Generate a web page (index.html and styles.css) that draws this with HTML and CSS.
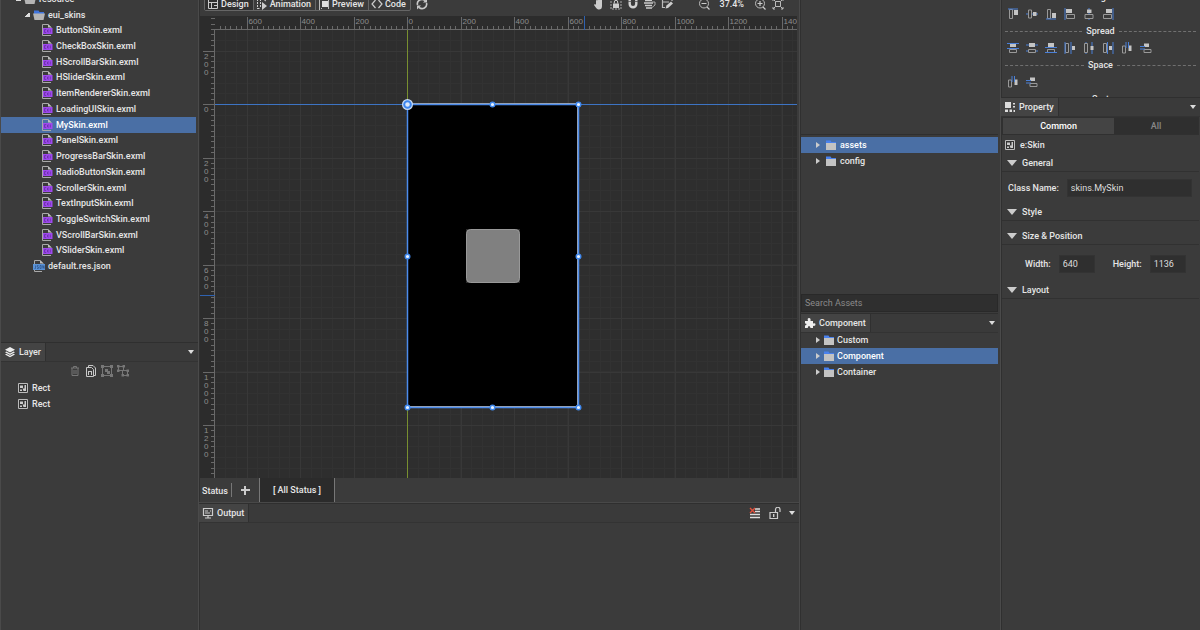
FILE: index.html
```html
<!DOCTYPE html>
<html lang="en">
<head>
<meta charset="utf-8">
<title>MySkin.exml</title>
<link rel="stylesheet" href="styles.css">
</head>
<body>
<svg class="defs" aria-hidden="true">
  <symbol id="exml" viewBox="0 0 12 12"><path d="M1.5 11.5v-11H7l3 3v1M1.5 11.5H10" fill="none" stroke="#a9a9a9"/><path d="M7 0v3.5h3.5z" fill="#bdbdbd"/><path d="M2 4h9.500v6H2z" fill="#9f4aee"/><path d="M3.5 5.5v3M3.500 5.500h1.500M3.500 7h1M3.500 8.500h1.500M6 5.500l1.500 3M7.500 5.500L6 8.500M9.300 5.500v3" stroke="#6a2da6" stroke-width=".8" fill="none"/></symbol>
  <symbol id="json" viewBox="0 0 12 12"><path d="M1.500 11.500v-11H7l3 3v1M1.500 11.500H9" fill="none" stroke="#a9a9a9"/><path d="M7 0v3.500h3.500z" fill="#bdbdbd"/><path d="M0 4h12v6H0z" fill="#5b93d6"/><path d="M2.500 5.500v3H1.500M5.500 5.500H4.200V7h1.200v1.500H4M7 5.500h1.200v3H7zM9.800 8.500v-3l1.300 3v-3" stroke="#2c5288" stroke-width=".7" fill="none"/></symbol>
  <symbol id="folder" viewBox="0 0 12 12"><path d="M1 1.500h4.500l1 1.500H11v3H1z" fill="#4a82ee"/><path d="M1 4h10v7H1z" fill="#c3c3c3"/></symbol>
  <symbol id="folder-open" viewBox="0 0 12 12"><path d="M1 1.500h4.500l1 1.500H11v3H1z" fill="#3f74dd"/><path d="M0 4.500h12L10.500 11h-9z" fill="#b5b5b5"/></symbol>
  <symbol id="skin" viewBox="0 0 12 12"><path d="M1.500 1.500h9v9h-9z" fill="#333" stroke="#bbb"/><path d="M3 3.500h3V6H3zM7.500 3h1.500V7H7.500zM3 7.500h2v1.500H3zM5.500 6.500h3.500v2.500H6.500z" fill="#ccc"/></symbol>
  <symbol id="layers" viewBox="0 0 12 12"><path d="M6 1l5 2.700-5 2.800-5-2.800zM1 6.200l1.400-.7L6 7.500l3.600-2 1.400.7L6 9zM1 8.500l1.400-.7L6 9.700l3.600-1.900 1.400.7-5 2.800z" fill="#eee"/></symbol>
  <symbol id="trash" viewBox="0 0 12 12"><path d="M2 3h8M4.500 3V1.500h3V3M3 3v7.500h6V3M5 5v4M7 5v4" fill="none" stroke="#777"/></symbol>
  <symbol id="copy" viewBox="0 0 12 12"><path d="M3.500 2.500v-2H8L10.500 3v7.500H9" fill="none" stroke="#c8c8c8"/><path d="M1.500 2.500h5l2 2v7h-7z" fill="#3b3b3b" stroke="#c8c8c8"/><path d="M3.500 6v4M6.500 6v4M3 6.500h4" stroke="#c8c8c8"/></symbol>
  <symbol id="group" viewBox="0 0 12 12"><path d="M1.500 1.500h9v9h-9z" fill="none" stroke="#777"/><path d="M0 0h3v3H0zM9 0h3v3H9zM0 9h3v3H0zM9 9h3v3H9zM4 4h3v3H4zM6 6h3v3H6z" fill="#777"/></symbol>
  <symbol id="ungroup" viewBox="0 0 12 12"><path d="M1.500 1.500h5v4h-5zM5.500 5.500h5v5h-5z" fill="none" stroke="#777"/><path d="M0 0h2.500v2.500H0zM5.500 0H8v2.500H5.500zM0 4.500h2.500V7H0zM4.500 9H7v2.500H4.500zM9.500 9H12v2.500H9.500zM9.500 4.500H12V7H9.500z" fill="#777"/></symbol>
  <symbol id="design" viewBox="0 0 12 12"><path d="M1.500 1.500h9v9h-9zM1.500 4.500h9M4.500 4.500v6M7 7.500h3.500" fill="none" stroke="#ccc"/></symbol>
  <symbol id="anim" viewBox="0 0 12 12"><path d="M1.500 1v10M1.500 1.500H6M1.500 10.500h3M4.500 1v9" fill="none" stroke="#ccc" stroke-dasharray="2 1"/><path d="M6 4l5 4-5 4z" fill="#ccc"/><path d="M7 1l3 2" stroke="#ccc"/></symbol>
  <symbol id="preview" viewBox="0 0 12 12"><path d="M1.500 0v12M3 1h1M3 10.500h1M10.500 1v10" stroke="#bbb" fill="none"/><path d="M4 3h6v6H4z" fill="#ddd"/></symbol>
  <symbol id="code" viewBox="0 0 12 12"><path d="M4.500 2L1 6l3.500 4M7.500 2L11 6l-3.500 4" fill="none" stroke="#ccc" stroke-width="1.200"/></symbol>
  <symbol id="refresh" viewBox="0 0 12 12"><path d="M1.500 7A4.500 4.500 0 0 1 9 2.700M10.500 5A4.500 4.500 0 0 1 3 9.300" fill="none" stroke="#c8c8c8" stroke-width="1.600"/><path d="M7 4.500h4V.5zM5 7.500H1v4z" fill="#c8c8c8"/></symbol>
  <symbol id="hand" viewBox="0 0 12 12"><path d="M3 6V2.500q.8-1 1.400 0V1q.8-1 1.500 0v-.3q.8-.9 1.500 0v1q.9-.9 1.600 0V8q0 3.500-3 3.500H5.500Q4 11.500 1 7q0-1.500 2-.4z" fill="#ccc"/></symbol>
  <symbol id="lock" viewBox="0 0 12 12"><path d="M1 1h10v10H1z" fill="none" stroke="#aaa" stroke-dasharray="2 1"/><path d="M3 5.500h6V10H3z" fill="#ccc"/><path d="M4.300 5.500V4a1.700 1.700 0 0 1 3.400 0v1.500" fill="none" stroke="#ccc"/></symbol>
  <symbol id="magnet" viewBox="0 0 12 12"><path d="M2.700 1v5a3.300 3.300 0 0 0 6.600 0V1" fill="none" stroke="#d2d2d2" stroke-width="2.400"/><path d="M1 3.500h3.500M7.500 3.500H11" stroke="#555" stroke-width=".8"/></symbol>
  <symbol id="stack" viewBox="0 0 12 12"><path d="M1 2.500h7M0 5h9M1 7.500h7M2 10h6" stroke="#ccc" stroke-width="1.700"/><path d="M8 4h3v3L8 9.500" fill="none" stroke="#aaa"/></symbol>
  <symbol id="edit" viewBox="0 0 12 12"><path d="M11 3V1.500H1.500v8H4M1.500 4H8" fill="none" stroke="#bbb" stroke-width="1.200"/><path d="M4.500 10.500l1-3 4.500-4 2 2L7 10z" fill="#ccc"/></symbol>
  <symbol id="zoom-out" viewBox="0 0 12 12"><circle cx="6" cy="5.500" r="4.500" fill="none" stroke="#bbb"/><path d="M3.500 5.500h5M9 9l2.500 2.500" stroke="#ccc" stroke-width="1.200"/></symbol>
  <symbol id="zoom-in" viewBox="0 0 12 12"><circle cx="6" cy="5.500" r="4.500" fill="none" stroke="#bbb"/><path d="M3.500 5.500h5M6 3v5M9 9l2.500 2.500" stroke="#ccc" stroke-width="1.200"/></symbol>
  <symbol id="fit" viewBox="0 0 12 12"><path d="M3.500 3.500h5v5h-5zM1 3V1h2M9 1h2v2M11 9v2H9M3 11H1V9M1 1l2.500 2.500M11 1L8.500 3.500M11 11L8.500 8.500M1 11l2.500-2.500" fill="none" stroke="#bbb"/></symbol>
  <symbol id="output" viewBox="0 0 12 12"><path d="M1.500 1.500h9v7h-9zM3 11h6M6 8.500v2.500M3 4h3M3 6h5M8 4h1" fill="none" stroke="#ccc" stroke-width="1.200"/></symbol>
  <symbol id="clear" viewBox="0 0 12 12"><path d="M6 2h5M6 4.500h5M1 7.500h10M1 10.500h10" stroke="#ddd" stroke-width="1.500"/><path d="M1 1l5 5M6 1L1 6" stroke="#e0503c" stroke-width="1.400"/></symbol>
  <symbol id="unlock" viewBox="0 0 12 12"><path d="M1 5.500h7.500v6H1zM6.500 5V2.500a2.200 2.200 0 0 1 4.500 0V5" fill="none" stroke="#ccc" stroke-width="1.200"/><path d="M4.700 7v3" stroke="#ccc" stroke-width="1.400"/></symbol>
  <symbol id="puzzle" viewBox="0 0 12 12"><path d="M1 4h3q-1-3 1-3t1.500 3H9v2.500q2.500-.8 2.500 1T9 8.800V11H6.500Q6 9 5 9t-1.300 2H1V8.500q1.500-.2 1.500-1.200T1 6.500z" fill="#eee"/></symbol>
  <symbol id="property" viewBox="0 0 12 12"><path d="M1 1h6v6H1zM1 8.500h3V11H1zM5.500 8.500H8V11H5.500zM9 2h2v1.500H9zM9 5h2v1.500H9zM9.500 9H11v2H9.500z" fill="#ddd"/></symbol>
  <!-- align and distribute glyphs -->
  <symbol id="a-top" viewBox="0 0 12 12"><path d="M2.500 1.500h3v9h-3z" fill="none" stroke="#999"/><path d="M7 2h4v5H7z" fill="#c4c4c4"/><path d="M1 1h10" stroke="#4a80d8"/></symbol>
  <symbol id="a-mid" viewBox="0 0 12 12"><path d="M0 6h12" stroke="#4a80d8"/><path d="M2.500 2h3v8h-3z" fill="#3b3b3b" stroke="#999"/><path d="M7 4h3.500v4H7z" fill="#c4c4c4"/></symbol>
  <symbol id="a-bot" viewBox="0 0 12 12"><path d="M2.500 1.500h3v9h-3z" fill="none" stroke="#999"/><path d="M7 5h4v5H7z" fill="#c4c4c4"/><path d="M1 11h10" stroke="#4a80d8"/></symbol>
  <symbol id="a-left" viewBox="0 0 12 12"><path d="M2.500 6.500h8v4h-8z" fill="none" stroke="#999"/><path d="M2 1h6v4H2z" fill="#c4c4c4"/><path d="M1 0v12" stroke="#4a80d8"/></symbol>
  <symbol id="a-center" viewBox="0 0 12 12"><path d="M6 0v12" stroke="#4a80d8"/><path d="M2 6.500h8v4H2z" fill="#3b3b3b" stroke="#999"/><path d="M4 1.500h4.500v3.500H4z" fill="#c4c4c4"/></symbol>
  <symbol id="a-right" viewBox="0 0 12 12"><path d="M1.500 6.500h8v4h-8z" fill="none" stroke="#999"/><path d="M4 1h6v4H4z" fill="#c4c4c4"/><path d="M11 0v12" stroke="#4a80d8"/></symbol>
  <symbol id="s-top" viewBox="0 0 12 12"><path d="M0 1.500h12M0 6.500h12" stroke="#4a80d8"/><path d="M3 2h6v3H3z" fill="#c4c4c4"/><path d="M2.500 7.500h7v3h-7z" fill="none" stroke="#999"/></symbol>
  <symbol id="s-mid" viewBox="0 0 12 12"><path d="M0 3h12M0 9h12" stroke="#4a80d8"/><path d="M3 1h6v4H3z" fill="#c4c4c4"/><path d="M2.500 7.500h7v3h-7z" fill="#3b3b3b" stroke="#999"/></symbol>
  <symbol id="s-bot" viewBox="0 0 12 12"><path d="M3 1h6v4H3z" fill="#c4c4c4"/><path d="M2.500 7.500h7v3h-7z" fill="none" stroke="#999"/><path d="M0 5.500h12M0 10.500h12" stroke="#4a80d8"/></symbol>
  <symbol id="s-left" viewBox="0 0 12 12"><path d="M1.500 1.500h3v9h-3z" fill="none" stroke="#999"/><path d="M8 4h3v4H8z" fill="#c4c4c4"/><path d="M1 0v12M7 0v12" stroke="#4a80d8"/></symbol>
  <symbol id="s-center" viewBox="0 0 12 12"><path d="M3 0v12M9 0v12" stroke="#4a80d8"/><path d="M1.500 1.500h3v9h-3z" fill="#3b3b3b" stroke="#999"/><path d="M7.500 4h3v4h-3z" fill="#c4c4c4"/></symbol>
  <symbol id="s-right" viewBox="0 0 12 12"><path d="M1.500 1.500h3v9h-3z" fill="none" stroke="#999"/><path d="M7 4h3v4H7z" fill="#c4c4c4"/><path d="M5.500 0v12M11 0v12" stroke="#4a80d8"/></symbol>
  <symbol id="p-h" viewBox="0 0 12 12"><path d="M1.500 4h3v7h-3z" fill="none" stroke="#999"/><path d="M7.500 3.500h3V9h-3z" fill="#c4c4c4"/><path d="M5 0v6M7.500 0v6" stroke="#4a80d8"/></symbol>
  <symbol id="p-v" viewBox="0 0 12 12"><path d="M4 1.500h5V5H4z" fill="#c4c4c4"/><path d="M4 7.500h7v3H4z" fill="none" stroke="#999"/><path d="M0 4.500h5M0 7h5" stroke="#4a80d8"/></symbol>
</svg>

<main class="ide">
  <aside class="col explorer">
    <section class="files">
      <ul class="tree">
        <li class="lv0"><i class="open"></i><svg class="ic"><use href="#folder-open"/></svg>resource</li>
        <li class="lv1"><i class="open"></i><svg class="ic"><use href="#folder-open"/></svg>eui_skins</li>
        <li class="lv2"><svg class="ic"><use href="#exml"/></svg>ButtonSkin.exml</li>
        <li class="lv2"><svg class="ic"><use href="#exml"/></svg>CheckBoxSkin.exml</li>
        <li class="lv2"><svg class="ic"><use href="#exml"/></svg>HScrollBarSkin.exml</li>
        <li class="lv2"><svg class="ic"><use href="#exml"/></svg>HSliderSkin.exml</li>
        <li class="lv2"><svg class="ic"><use href="#exml"/></svg>ItemRendererSkin.exml</li>
        <li class="lv2"><svg class="ic"><use href="#exml"/></svg>LoadingUISkin.exml</li>
        <li class="lv2 selected"><svg class="ic"><use href="#exml"/></svg>MySkin.exml</li>
        <li class="lv2"><svg class="ic"><use href="#exml"/></svg>PanelSkin.exml</li>
        <li class="lv2"><svg class="ic"><use href="#exml"/></svg>ProgressBarSkin.exml</li>
        <li class="lv2"><svg class="ic"><use href="#exml"/></svg>RadioButtonSkin.exml</li>
        <li class="lv2"><svg class="ic"><use href="#exml"/></svg>ScrollerSkin.exml</li>
        <li class="lv2"><svg class="ic"><use href="#exml"/></svg>TextInputSkin.exml</li>
        <li class="lv2"><svg class="ic"><use href="#exml"/></svg>ToggleSwitchSkin.exml</li>
        <li class="lv2"><svg class="ic"><use href="#exml"/></svg>VScrollBarSkin.exml</li>
        <li class="lv2"><svg class="ic"><use href="#exml"/></svg>VSliderSkin.exml</li>
        <li class="lv1 leaf"><svg class="ic"><use href="#json"/></svg>default.res.json</li>
      </ul>
    </section>
    <section>
      <header class="head"><h2 class="tab"><svg class="ic"><use href="#layers"/></svg>Layer</h2><button class="more" aria-label="Layer menu"></button></header>
      <div class="layer-tools">
        <button aria-label="Delete"><svg class="ic"><use href="#trash"/></svg></button>
        <button aria-label="Copy"><svg class="ic"><use href="#copy"/></svg></button>
        <button aria-label="Group"><svg class="ic"><use href="#group"/></svg></button>
        <button aria-label="Ungroup"><svg class="ic"><use href="#ungroup"/></svg></button>
      </div>
      <ul class="layers">
        <li><svg class="ic"><use href="#skin"/></svg>Rect</li>
        <li><svg class="ic"><use href="#skin"/></svg>Rect</li>
      </ul>
    </section>
  </aside>

  <section class="col editor">
    <div class="toolbar">
      <div class="modes">
        <button class="on"><svg class="ic"><use href="#design"/></svg>Design</button>
        <button><svg class="ic"><use href="#anim"/></svg>Animation</button>
        <button><svg class="ic"><use href="#preview"/></svg>Preview</button>
        <button><svg class="ic"><use href="#code"/></svg>Code</button>
      </div>
      <button aria-label="Refresh"><svg class="ic"><use href="#refresh"/></svg></button>
      <div class="tools">
        <button aria-label="Hand"><svg class="ic"><use href="#hand"/></svg></button>
        <button aria-label="Lock"><svg class="ic"><use href="#lock"/></svg></button>
        <button aria-label="Snap"><svg class="ic"><use href="#magnet"/></svg></button>
        <button aria-label="Layers"><svg class="ic"><use href="#stack"/></svg></button>
        <button aria-label="Edit"><svg class="ic"><use href="#edit"/></svg></button>
      </div>
      <div class="zoom">
        <button aria-label="Zoom out"><svg class="ic"><use href="#zoom-out"/></svg></button>
        <output>37.4%</output>
        <button aria-label="Zoom in"><svg class="ic"><use href="#zoom-in"/></svg></button>
        <button aria-label="Fit"><svg class="ic"><use href="#fit"/></svg></button>
      </div>
    </div>
    <div class="stage">
      <svg class="canvas" id="canvas" role="img" aria-label="Canvas">
        <g id="grid"></g>
        <path class="guide" d="M15 88.500H3000"/>
        <path class="guide-y" d="M207.500 14V3000"/>
        <path d="M207 88h172v304H207z" fill="#000"/>
        <rect x="266" y="213" width="54" height="54" fill="#4c4c4c"/>
        <path d="M266 218v-5h5zM315 213h5v5zM320 262v5h-5zM271 267h-5v-5z" fill="#2a2a2a"/>
        <rect x="266.500" y="213.500" width="53" height="53" rx="4" fill="#808080" stroke="#999"/>
        <path class="edge-light" d="M207 87.500h171.500M377.500 88v303M207 390.500h171"/>
        <path class="edge" d="M207.500 391.500V88.500H378.500V391.500z"/>
        <g class="handles">
          <circle cx="292.500" cy="88.500" r="2.300"/><circle cx="378.500" cy="88.500" r="2.300"/>
          <circle cx="207.500" cy="240.500" r="2.300"/><circle cx="378.500" cy="240.500" r="2.300"/>
          <circle cx="207.500" cy="391.500" r="2.300"/><circle cx="292.500" cy="391.500" r="2.300"/><circle cx="378.500" cy="391.500" r="2.300"/>
        </g>
        <circle cx="207.500" cy="88.500" r="5.500" fill="#c9dcf5"/>
        <circle cx="207.500" cy="88.500" r="3.300" fill="#dbe7f8" stroke="#3d86ee" stroke-width="2"/>
        <g id="rulers" class="rulers"></g>
      </svg>
    </div>
    <div class="status">
      <span class="status-name">Status</span>
      <button class="add" aria-label="Add status"></button>
      <button class="state">[ All Status ]</button>
    </div>
    <section class="output">
      <header class="head"><h2 class="tab"><svg class="ic"><use href="#output"/></svg>Output</h2>
        <div class="head-tools">
          <button aria-label="Clear"><svg class="ic"><use href="#clear"/></svg></button>
          <button aria-label="Unlock"><svg class="ic"><use href="#unlock"/></svg></button>
          <button class="more" aria-label="Output menu"></button>
        </div>
      </header>
    </section>
  </section>

  <aside class="col assets">
    <section class="asset-list">
      <ul class="list">
        <li class="selected"><i class="shut"></i><svg class="ic"><use href="#folder"/></svg>assets</li>
        <li><i class="shut"></i><svg class="ic"><use href="#folder"/></svg>config</li>
      </ul>
      <input class="search" type="text" placeholder="Search Assets" aria-label="Search Assets">
    </section>
    <section>
      <header class="head"><h2 class="tab"><svg class="ic"><use href="#puzzle"/></svg>Component</h2><button class="more" aria-label="Component menu"></button></header>
      <ul class="list tight">
        <li><i class="shut"></i><svg class="ic"><use href="#folder"/></svg>Custom</li>
        <li class="selected"><i class="shut"></i><svg class="ic"><use href="#folder"/></svg>Component</li>
        <li><i class="shut"></i><svg class="ic"><use href="#folder"/></svg>Container</li>
      </ul>
    </section>
  </aside>

  <aside class="col inspector">
    <section class="align">
      <h3>Align</h3>
      <div class="glyphs">
        <button aria-label="Align top"><svg class="ic"><use href="#a-top"/></svg></button>
        <button aria-label="Align middle"><svg class="ic"><use href="#a-mid"/></svg></button>
        <button aria-label="Align bottom"><svg class="ic"><use href="#a-bot"/></svg></button>
        <button aria-label="Align left"><svg class="ic"><use href="#a-left"/></svg></button>
        <button aria-label="Align center"><svg class="ic"><use href="#a-center"/></svg></button>
        <button aria-label="Align right"><svg class="ic"><use href="#a-right"/></svg></button>
      </div>
      <h3>Spread</h3>
      <div class="glyphs">
        <button aria-label="Spread top"><svg class="ic"><use href="#s-top"/></svg></button>
        <button aria-label="Spread middle"><svg class="ic"><use href="#s-mid"/></svg></button>
        <button aria-label="Spread bottom"><svg class="ic"><use href="#s-bot"/></svg></button>
        <button aria-label="Spread left"><svg class="ic"><use href="#s-left"/></svg></button>
        <button aria-label="Spread center"><svg class="ic"><use href="#s-center"/></svg></button>
        <button aria-label="Spread right"><svg class="ic"><use href="#s-right"/></svg></button>
        <button aria-label="Spread horizontally"><svg class="ic"><use href="#p-h"/></svg></button>
        <button aria-label="Spread vertically"><svg class="ic"><use href="#p-v"/></svg></button>
      </div>
      <h3>Space</h3>
      <div class="glyphs">
        <button aria-label="Space horizontally"><svg class="ic"><use href="#p-h"/></svg></button>
        <button aria-label="Space vertically"><svg class="ic"><use href="#p-v"/></svg></button>
      </div>
      <h3>Sort</h3>
    </section>
    <section>
      <header class="head"><h2 class="tab"><svg class="ic"><use href="#property"/></svg>Property</h2><button class="more" aria-label="Property menu"></button></header>
      <div class="switch"><button class="on">Common</button><button>All</button></div>
      <p class="target"><svg class="ic"><use href="#skin"/></svg>e:Skin</p>
      <h4>General</h4>
      <div class="fields"><label for="cls">Class Name:</label><input id="cls" class="wide" type="text" value="skins.MySkin"></div>
      <h4>Style</h4>
      <h4 class="spaced">Size &amp; Position</h4>
      <div class="fields size"><label for="w">Width:</label><input id="w" type="text" value="640"><label for="h">Height:</label><input id="h" type="text" value="1136"></div>
      <h4>Layout</h4>
    </section>
  </aside>
</main>
<script src="canvas.js"></script>
</body>
</html>
```
FILE: styles.css
```css
* { box-sizing: border-box; }
body {
  margin: 0;
  background: #3b3b3b;
  color: #e6e6e6;
  font: 500 9px/12px Roboto, "Liberation Sans", sans-serif;
}
ul, h2, h3, h4, p { margin: 0; padding: 0; font: inherit; list-style: none; }
button, input { font: inherit; color: inherit; background: none; border: 0; padding: 0; margin: 0; border-radius: 0; }
button { display: inline-flex; align-items: center; justify-content: center; }
.defs { display: none; }
.ic { width: 12px; height: 12px; flex: none; display: block; }

.ide {
  display: grid;
  grid-template-columns: 198px minmax(0, 1fr) 201px 200px;
  height: 100vh;
  overflow: hidden;
}
.col { min-width: 0; overflow: hidden; border-left: 1px solid #4a4a4a; }
.editor, .assets, .inspector { box-shadow: inset 1px 0 #303030; }

.head {
  display: flex;
  align-items: stretch;
  justify-content: space-between;
  height: 20px;
  border-top: 1px solid #2f2f2f;
  border-bottom: 1px solid #333;
  background: #3a3a3a;
}
.tab {
  display: flex;
  align-items: center;
  gap: 3px;
  padding: 0 4px 0 3px;
  background: #444;
  border-right: 1px solid #303030;
}
.more { width: 15px; }
.more::before { content: ""; border: 3px solid transparent; border-top: 4px solid #ddd; border-bottom: 0; }

/* explorer */
.files { height: 342px; overflow: hidden; }
.tree { display: grid; grid-auto-rows: 1fr; height: 283px; margin-top: -9px; }
.tree li, .list li { display: flex; align-items: center; gap: 3px; }
.tree .lv0 { padding-left: 15px; }
.tree .lv1 { padding-left: 24px; }
.tree .leaf { padding-left: 32px; }
.tree .lv2 { padding-left: 40px; }
.selected { background: #4a6fa5; color: #fff; }
.tree .selected { margin-right: 2px; }
.open { width: 5px; height: 5px; background: linear-gradient(135deg, transparent 50%, #ddd 50%); }
.shut { width: 4px; height: 6px; background: #ccc; clip-path: polygon(0 0, 100% 50%, 0 100%); }
.layer-tools { display: flex; gap: 4px; height: 18px; padding-left: 68px; }
.layers { padding-left: 16px; }
.layers li { display: flex; align-items: center; gap: 3px; height: 16px; }

/* editor */
.editor { display: flex; flex-direction: column; }
.toolbar { display: flex; flex: none; height: 25px; margin-top: -9px; padding: 1px 15px 5px 5px; }
.modes { display: flex; margin-right: 5px; border: 1px solid #666; border-radius: 2px; }
.modes button { gap: 2px; padding: 4px 4px 0 2px; border-right: 1px solid #666; }
.modes button:last-child { border-right: 0; }
.modes .on { background: #303030; }
.toolbar > button, .tools, .zoom { padding-top: 4px; }
.tools { display: flex; gap: 5px; margin-left: auto; margin-right: 25px; }
.zoom { display: flex; align-items: center; gap: 6px; }
.zoom output { padding: 0 4px; }
.stage { flex: none; height: 462px; margin: 0 2px 0 1px; background: #2e2e2e; overflow: hidden; }
.canvas { display: block; width: 100%; height: 100%; }
.guide { stroke: #3d74c4; }
.guide-y { stroke: #788f30; }
.edge { fill: none; stroke: #4b8bec; stroke-width: 1.500; }
.edge-light { fill: none; stroke: #a9a9a9; }
.handles { fill: #eaf2fd; stroke: #4089ee; stroke-width: 1.400; }
.rulers { font: 8px "Liberation Sans", sans-serif; fill: #8c8c8c; }
.ruler-bg { fill: #2c2c2c; }
.tick { stroke: #696969; }
.minor { stroke: #323232; }
.major { stroke: #383838; }
.rulers .mark { stroke: #2f62b0; fill: none; }
.status { display: flex; flex: none; align-items: stretch; height: 25px; padding-left: 1px; border-bottom: 1px solid #484848; }
.status-name { margin: 5px 0; padding: 2px 3px 0 2px; border-right: 1px solid #777; line-height: 12px; }
.add { width: 27px; background: linear-gradient(#ccc, #ccc) center / 9px 2px no-repeat, linear-gradient(#ccc, #ccc) center / 2px 9px no-repeat; }
.state { width: 76px; background: #2b2b2b; border: 1px solid #777; border-width: 0 1px; }
.head-tools { display: flex; gap: 8px; }
.head-tools .more { margin-left: -5px; }

/* assets */
.assets { padding: 0 2px 0 1px; }
.asset-list { display: flex; flex-direction: column; height: 313px; padding-top: 134px; }
.asset-list .list { flex: 1; padding-top: 2px; border-top: 1px solid #2f2f2f; }
.list li { height: 16px; padding-left: 15px; gap: 5px; }
.list .ic { margin-right: -2px; }
.tight .ic { margin: 0 -3px 0 -2px; }
.search { height: 18px; margin-bottom: 1px; padding: 0 3px; background: #2f2f2f; border: 1px solid #292929; font-weight: 400; }
.search::placeholder { color: #8a8a8a; }
.assets .more { width: 13px; }
.tight { margin-top: -1px; }

/* inspector */
.align { height: 97px; overflow: hidden; padding: 0 4px; }
.align h3 { display: flex; align-items: center; gap: 4px; height: 12px; }
.align h3::before, .align h3::after { content: ""; flex: 1; border-top: 1px dashed #707070; }
.align h3:first-child { margin-top: -9px; }
.glyphs { display: flex; gap: 7px; height: 22px; padding-left: 2px; }
.align .glyphs .ic { margin: auto; }
.switch { display: grid; grid-template-columns: 57% 43%; height: 18px; margin: 0 1px; border: 1px solid #303030; }
.switch button { background: #2f2f2f; color: #888; }
.switch .on { background: #444; color: #fff; }
.target { display: flex; align-items: center; gap: 4px; height: 20px; padding-left: 3px; }
.inspector h4 { display: flex; align-items: center; gap: 5px; height: 17px; margin: 0 1px; padding-left: 5px; border-bottom: 1px solid #313131; }
.inspector h4::before { content: ""; border: 5px solid transparent; border-top: 6px solid #ccc; border-bottom: 0; }
.inspector .spaced { margin-top: 7px; }
.fields { display: flex; align-items: center; height: 32px; padding: 0 8px 0 7px; gap: 8px; }
.fields input { width: 36px; height: 18px; padding: 0 3px; background: #2f2f2f; border: 1px solid #333; color: #ddd; font-weight: 400; }
.fields .wide { flex: 1; min-width: 0; }
.size { height: 37px; padding-left: 24px; }
.size input { margin-right: 10px; }
```
FILE: canvas.js
```js
// Draws the canvas grid and both rulers around the artboard origin.
(function () {
  var ns = 'http://www.w3.org/2000/svg';
  var svg = document.getElementById('canvas');
  var grid = document.getElementById('grid');
  var rulers = document.getElementById('rulers');
  var box = svg.getBoundingClientRect();
  var ox = 207, oy = 88, major = 53.5, step = major / 10;

  function add(parent, tag, attrs, text) {
    var el = document.createElementNS(ns, tag);
    for (var k in attrs) el.setAttribute(k, attrs[k]);
    if (text) el.textContent = text;
    parent.appendChild(el);
  }
  function snap(v) { return Math.round(v) + 0.5; }

  [false, true].forEach(function (strong) {
    var cls = strong ? 'major' : 'minor';
    var gap = strong ? major : major / 5;
    for (var x = ox % gap; x < box.width; x += gap)
      add(grid, 'path', { 'class': cls, d: 'M' + snap(x) + ' 0V' + box.height });
    for (var y = oy % gap; y < box.height; y += gap)
      add(grid, 'path', { 'class': cls, d: 'M0 ' + snap(y) + 'H' + box.width });
  });

  add(rulers, 'path', { 'class': 'ruler-bg', d: 'M0 0H' + box.width + 'V14H15V' + box.height + 'H0z' });
  add(rulers, 'path', { 'class': 'tick', d: 'M15 13.500H' + box.width + 'M14.500 14V' + box.height });

  for (var i = -38; ox + i * step < box.width; i++) {
    var px = snap(ox + i * step), isMajor = i % 10 === 0;
    if (px < 15) continue;
    add(rulers, 'path', { 'class': 'tick', d: 'M' + px + ' ' + (isMajor ? 1 : 10) + 'V14' });
    if (isMajor) add(rulers, 'text', { x: px + 1, y: 8 }, String(Math.abs(i * 20)));
  }
  for (var j = -16; oy + j * step < box.height; j++) {
    var py = snap(oy + j * step), big = j % 10 === 0;
    add(rulers, 'path', { 'class': 'tick', d: 'M' + (big ? 3 : 11) + ' ' + py + 'H15' });
    if (big) String(Math.abs(j * 20)).split('').forEach(function (c, n) {
      add(rulers, 'text', { x: 4, y: py + 7 + n * 8 }, c);
    });
  }
  add(rulers, 'path', { 'class': 'mark', d: 'M384.500 0V14M0 279.500H15' });
})();
```
